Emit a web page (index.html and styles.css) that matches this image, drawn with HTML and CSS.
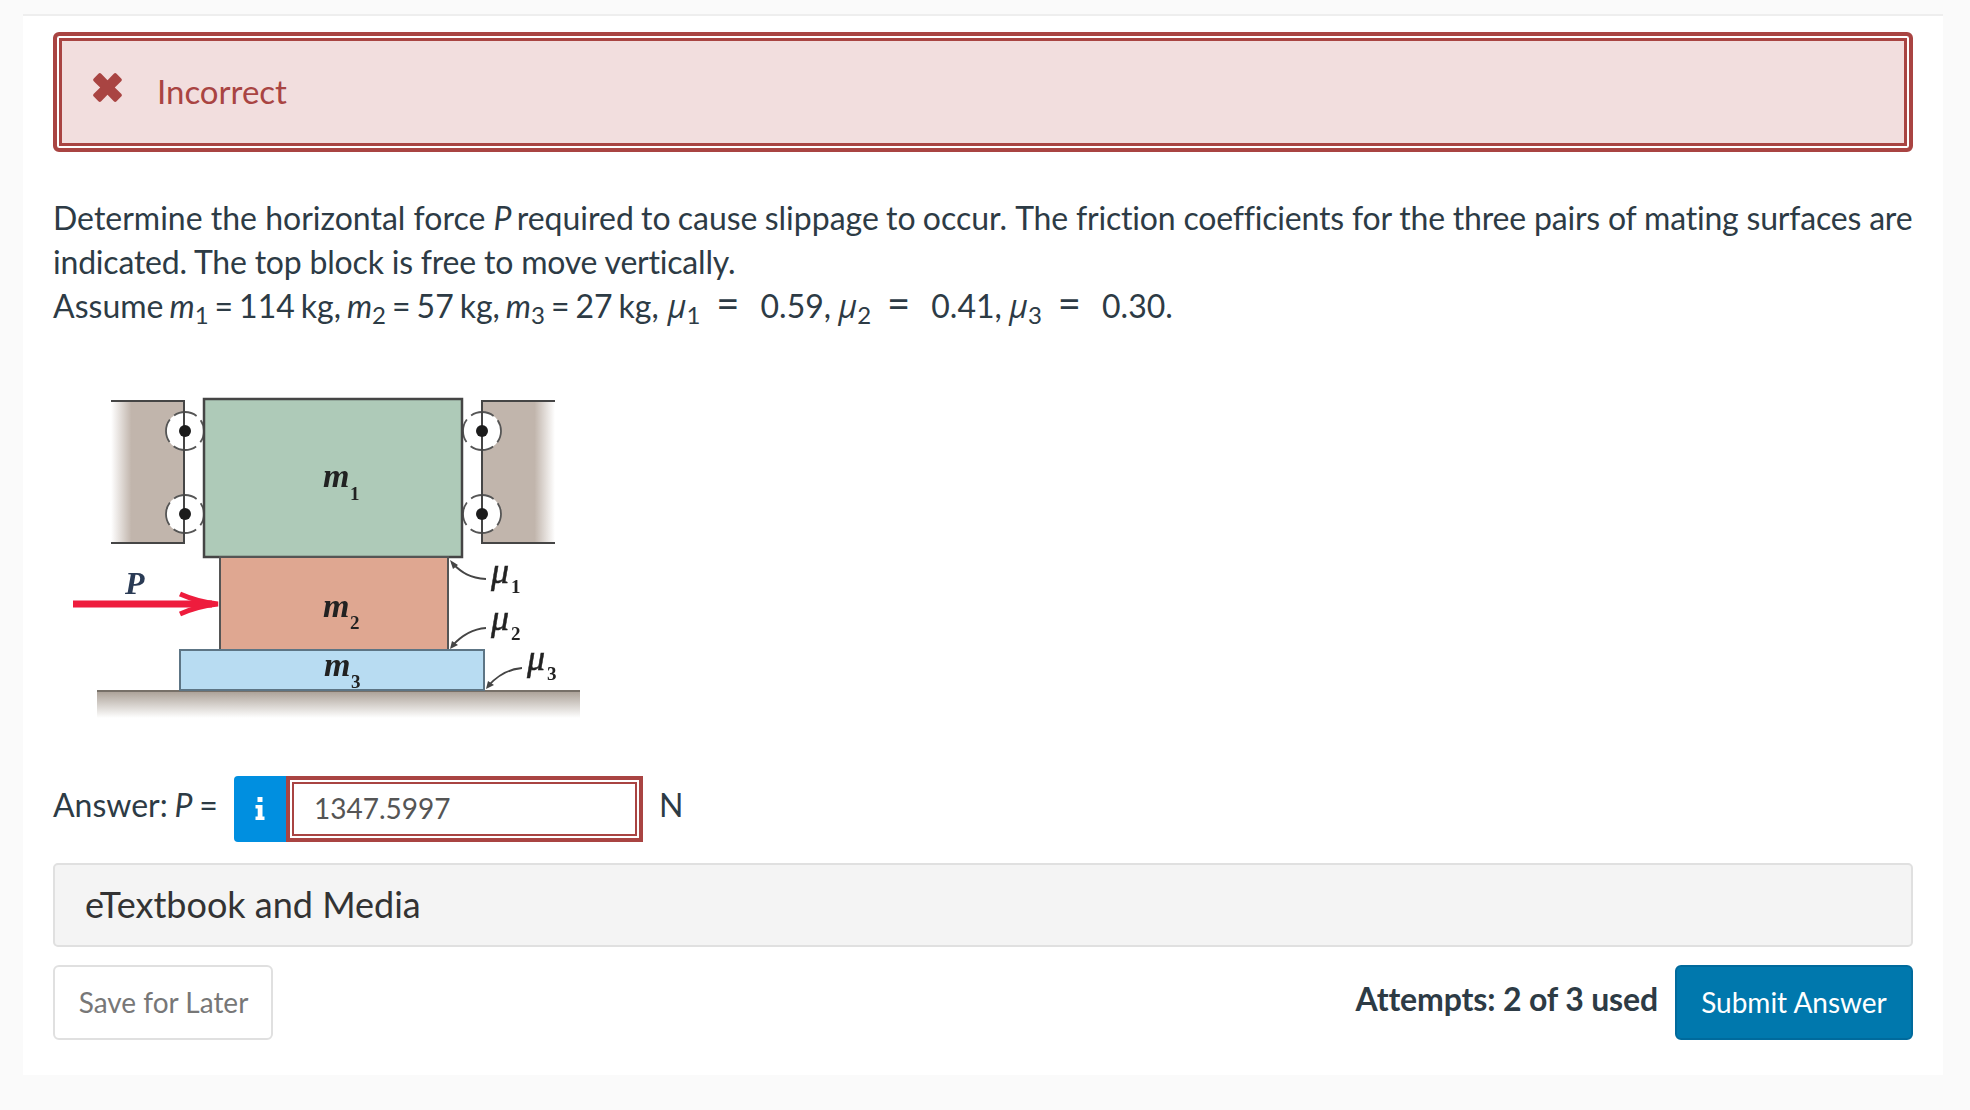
FILE: index.html
```html
<!DOCTYPE html>
<html lang="en">
<head>
<meta charset="utf-8">
<title>Question</title>
<link rel="stylesheet" href="styles.css">
</head>
<body>
<main class="card">
  <div class="alert">
    <svg class="alert-icon" viewBox="0 0 29 29" width="29" height="29"><path d="M3 10.5 0.8 8.2a2 2 0 0 1 0-2.8L5.4 0.8a2 2 0 0 1 2.8 0L14.5 7.2 20.800 0.800a2 2 0 0 1 2.800 0L28.200 5.400a2 2 0 0 1 0 2.800L21.800 14.500l6.400 6.300a2 2 0 0 1 0 2.800L23.600 28.200a2 2 0 0 1-2.800 0L14.500 21.800 8.200 28.200a2 2 0 0 1-2.800 0L0.800 23.600a2 2 0 0 1 0-2.800L7.200 14.500Z" fill="#a94442"/></svg>
    <span class="alert-text">Incorrect</span>
  </div>
  <p class="question">Determine the horizontal force <i>P</i><span class="tight-gap"> </span><span class="part-b">required to cause slippage to occur.</span> <span class="part-c">The friction coefficients for the three pairs of mating surfaces are</span> <span class="part-d">indicated. The top block is free to move vertically.</span><br><span class="part-e">Assume <i>m</i><sub>1</sub> = 114 kg, <i>m</i><sub>2</sub> = 57 kg, <i>m</i><sub>3</sub> = 27 kg, <i class="mu mu-first">μ</i><sub>1</sub><span class="eq">=</span>0.59, <i class="mu">μ</i><sub>2</sub><span class="eq">=</span>0.41, <i class="mu">μ</i><sub>3</sub><span class="eq">=</span>0.30.</span></p>
  <svg class="figure" viewBox="53 390 530 340" width="530" height="340">
    <defs>
      <linearGradient id="wl" x1="0" x2="1" y1="0" y2="0"><stop offset="0" stop-color="#fff"/><stop offset=".28" stop-color="#c1b5ac"/><stop offset="1" stop-color="#c1b5ac"/></linearGradient>
      <linearGradient id="wr" x1="1" x2="0" y1="0" y2="0"><stop offset="0" stop-color="#fff"/><stop offset=".28" stop-color="#c1b5ac"/><stop offset="1" stop-color="#c1b5ac"/></linearGradient>
      <linearGradient id="gr" x1="0" x2="0" y1="0" y2="1"><stop offset="0" stop-color="#aaa096"/><stop offset="1" stop-color="#fff"/></linearGradient>
      <filter id="soft"><feGaussianBlur stdDeviation="0.5"/></filter>
    </defs>
    <g filter="url(#soft)">
      <rect x="111" y="401" width="73" height="142" fill="url(#wl)"/>
      <path d="M111 401H184V543H111" fill="none" stroke="#444" stroke-width="2"/>
      <rect x="482" y="401" width="73" height="142" fill="url(#wr)"/>
      <path d="M555 401H482V543H555" fill="none" stroke="#444" stroke-width="2"/>
      <g fill="#fff" stroke="#555" stroke-width="1.800" stroke-dasharray="24 5.800" stroke-dashoffset="12">
        <circle cx="185" cy="431" r="19"/><circle cx="185" cy="514" r="19"/>
        <circle cx="482" cy="431" r="19"/><circle cx="482" cy="514" r="19"/>
      </g>
      <path d="M184 410V535M482 410V535" stroke="#444" stroke-width="2"/>
      <g fill="#1c1c1e">
        <circle cx="185" cy="431" r="6"/><circle cx="185" cy="514" r="6"/>
        <circle cx="482" cy="431" r="6"/><circle cx="482" cy="514" r="6"/>
      </g>
      <rect x="97" y="691" width="483" height="27" fill="url(#gr)"/>
      <path d="M97 691H580" stroke="#777068" stroke-width="2"/>
      <rect x="204" y="399" width="258" height="158" fill="#aecab8" stroke="#444" stroke-width="2.500"/>
      <rect x="220" y="557" width="228" height="93" fill="#dfa791" stroke="#555" stroke-width="2"/>
      <rect x="180" y="650" width="304" height="40" fill="#b8dcf2" stroke="#5d7585" stroke-width="2"/>
      <path d="M73 604H212" stroke="#ee1c3d" stroke-width="7"/>
      <path d="M180 594Q198 602 218 604Q198 606 180 614" fill="none" stroke="#ee1c3d" stroke-width="5"/>
      <g fill="none" stroke="#444" stroke-width="1.800">
        <path d="M486 579C470 578 462 573 452 563"/>
        <path d="M486 628C472 629 462 635 452 646"/>
        <path d="M522 668C508 669 498 675 488 686"/>
      </g>
      <path d="M450 560 458 565 453 569ZM450 649 452 641 458 645ZM486 689 488 681 494 685Z" fill="#444"/>
      <g class="fig-math">
        <text x="323" y="487">m</text><text class="fig-sub" x="350" y="500">1</text>
        <text x="323" y="617">m</text><text class="fig-sub" x="350" y="629">2</text>
        <text x="324" y="676">m</text><text class="fig-sub" x="351" y="688">3</text>
        <text class="fig-p" x="125" y="594">P</text>
        <text class="fig-mu" x="491" y="583">μ</text><text class="fig-sub" x="511" y="593">1</text>
        <text class="fig-mu" x="491" y="630">μ</text><text class="fig-sub" x="511" y="640">2</text>
        <text class="fig-mu" x="527" y="670">μ</text><text class="fig-sub" x="547" y="680">3</text>
      </g>
    </g>
  </svg>
  <div class="answer">
    <span class="answer-label">Answer: <i>P</i> =</span>
    <span class="info"><svg viewBox="0 0 12 24" width="12" height="24"><path d="M3.500 0h5v5h-5ZM1.500 8h7v11.500h2V23h-9v-3.500h2.200V11.500H1.500Z" fill="#fff"/></svg></span>
    <span class="input">1347.5997</span>
    <span class="unit">N</span>
  </div>
  <div class="panel">eTextbook and Media</div>
  <div class="actions">
    <button class="btn-save" type="button">Save for Later</button>
    <div class="actions-right">
      <span class="attempts">Attempts: 2 of 3 used</span>
      <button class="btn-submit" type="button">Submit Answer</button>
    </div>
  </div>
</main>
</body>
</html>
```
FILE: styles.css
```css
* { box-sizing: border-box; }
html, body { margin: 0; height: 100%; }
body {
  background: #fafafa;
  font-family: Lato, "Liberation Sans", sans-serif;
  color: #2d3b45;
  padding: 14px 27px 0 23px;
  overflow: hidden;
}
.card {
  background: #fff;
  border-top: 2px solid #eee;
  height: 1061px;
  padding: 16px 30px 0 30px;
}
.alert {
  height: 120px;
  background: #f2dede;
  border: 4px solid #a94442;
  border-radius: 6px;
  box-shadow: inset 0 0 0 2px #fff, inset 0 0 0 5px #a94442;
  display: flex;
  align-items: center;
  padding-left: 36px;
  color: #a94442;
  font-size: 33px;
}
.alert-icon { margin-top: -10px; margin-right: 35px; flex: none; }
.alert-text { margin-top: -2px; }
.question {
  margin: 44px 0 0;
  font-size: 32px;
  line-height: 44px;
  white-space: nowrap;
}
.tight-gap { word-spacing: -3px; }
.part-b { word-spacing: -1px; }
.part-c { letter-spacing: -0.19px; }
.part-c::after { content: "\A"; white-space: pre; }
.part-d { letter-spacing: -0.2px; }
.part-e { word-spacing: -2.2px; }
.question sub { font-size: 24px; line-height: 0; vertical-align: -6px; }
.mu { font-family: "Open Sans", sans-serif; margin-left: 1.5px; }
.mu-first { margin-left: 3px; }
.eq { margin: 0 21px 0 16px; font-size: 40px; line-height: 0; }
.figure { display: block; margin: 62px 0 46px; }
.answer { display: flex; align-items: flex-start; height: 66px; }
.answer-label { font-size: 32px; line-height: 58px; width: 181px; flex: none; word-spacing: -1.5px; }
.info {
  width: 52px; height: 66px; flex: none;
  background: #008fe0;
  border-radius: 4px 0 0 4px;
  display: flex; align-items: center; justify-content: center;
}
.input {
  width: 357px; height: 66px; flex: none;
  border: 4px solid #a94442;
  box-shadow: inset 0 0 0 2px #fff, inset 0 0 0 4px #a94442;
  padding-left: 24px;
  font-size: 28px;
  line-height: 57px;
  color: #555;
}
.unit { font-size: 32px; line-height: 58px; margin-left: 16px; }
.panel {
  margin-top: 21px;
  height: 84px;
  background: #f4f4f4;
  border: 2px solid #e0e0e0;
  border-radius: 5px;
  font-size: 36px;
  line-height: 78px;
  padding-left: 30px;
  color: #333;
}
.actions { display: flex; justify-content: space-between; margin-top: 18px; }
.btn-save {
  width: 220px; height: 75px;
  background: #fff;
  border: 2px solid #e0e0e0;
  border-radius: 6px;
  font: 28px Lato, sans-serif;
  color: #777;
  padding: 0 0 2px 1px;
}
.actions-right { display: flex; align-items: flex-start; }
.attempts { font-size: 32px; font-weight: 700; letter-spacing: -0.14px; line-height: 68px; margin-right: 17px; }
.btn-submit {
  width: 238px; height: 75px;
  background: #0078ad;
  border: 2px solid #006a9c;
  border-radius: 6px;
  font: 28px Lato, sans-serif;
  color: #fff;
  padding: 0 0 2px;
}
.fig-math text { font-family: "Liberation Serif", serif; font-style: italic; font-weight: bold; font-size: 34px; fill: #222; }
.fig-math .fig-sub { font-style: normal; font-weight: bold; font-size: 19px; }
.fig-math .fig-p { font-size: 32px; fill: #2a3a55; }
.fig-math .fig-mu { font-weight: normal; font-size: 36px; stroke: #222; stroke-width: 0.5px; }
```
